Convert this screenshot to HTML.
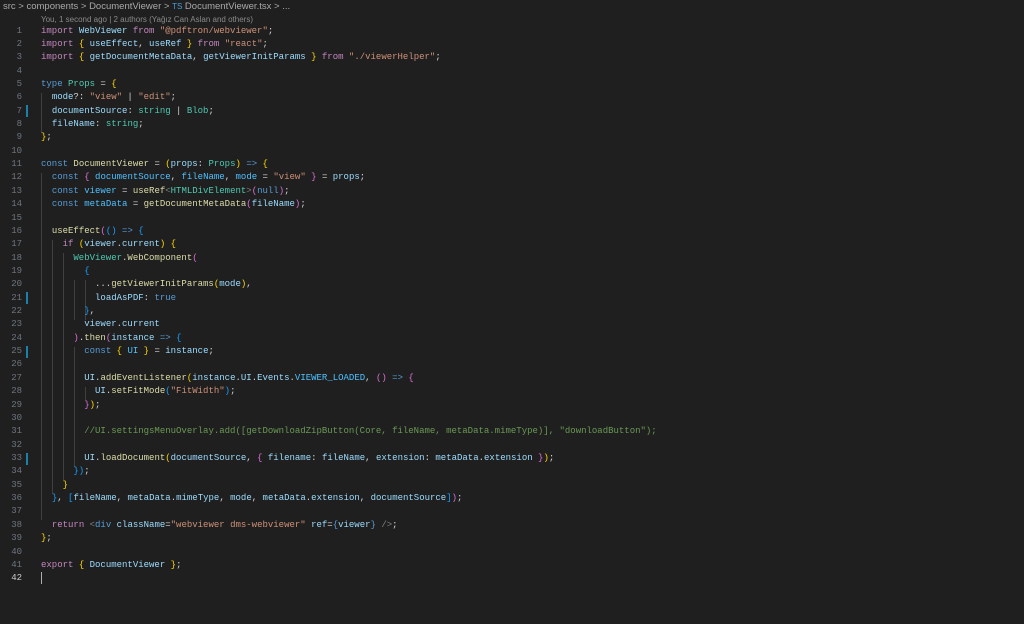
<!DOCTYPE html>
<html><head><meta charset="utf-8"><style>
body{margin:0;width:1024px;height:624px;background:#1f1f1f;overflow:hidden;position:relative;font-family:"Liberation Mono",monospace;}
.bc{position:absolute;left:3px;top:0;height:14px;font:9.5px "Liberation Sans",sans-serif;color:#a9a9a9;line-height:13px;white-space:pre}
.bl{position:absolute;left:41px;top:14px;font:8px "Liberation Sans",sans-serif;color:#8a8a8a;line-height:11px}
.nums{position:absolute;left:0;width:22px;top:24.5px;text-align:right;font-size:9px;line-height:13.37px;color:#6e7681}
.code{position:absolute;left:41px;top:24.5px;font-size:9px;line-height:13.37px;color:#d4d4d4}
.code div{white-space:pre}
.code div,.nums div{height:13.37px}
.k{color:#c586c0}.b{color:#569cd6}.v{color:#9cdcfe}.c{color:#4fc1ff}.f{color:#dcdcaa}.t{color:#4ec9b0}.s{color:#ce9178}.y{color:#ffd700}.p{color:#da70d6}.q{color:#179fff}.g{color:#6a9955}.gr{color:#808080}
.guide{position:absolute;width:1px;background:#404040}
.mod{position:absolute;left:26px;width:2px;background:#1b81a8}
</style></head><body>
<div class="bc">src &gt; components &gt; DocumentViewer &gt; <span style="color:#4a9fd6;font-size:8px">TS</span> DocumentViewer.tsx &gt; ...</div>
<div class="bl">You, 1 second ago | 2 authors (Yağız Can Aslan and others)</div>
<div class="guide" style="left:41px;top:93px;height:40px"></div>
<div class="guide" style="left:41px;top:173px;height:347px"></div>
<div class="guide" style="left:52px;top:240px;height:254px"></div>
<div class="guide" style="left:63px;top:253px;height:227px"></div>
<div class="guide" style="left:74px;top:280px;height:40px"></div>
<div class="guide" style="left:85px;top:280px;height:40px"></div>
<div class="guide" style="left:74px;top:347px;height:120px"></div>
<div class="guide" style="left:85px;top:387px;height:13px"></div>
<div class="mod" style="top:105px;height:12px"></div>
<div class="mod" style="top:292px;height:12px"></div>
<div class="mod" style="top:346px;height:12px"></div>
<div class="mod" style="top:453px;height:12px"></div>
<div class="nums">
<div>1</div><div>2</div><div>3</div><div>4</div><div>5</div><div>6</div><div>7</div><div>8</div><div>9</div><div>10</div><div>11</div><div>12</div><div>13</div><div>14</div><div>15</div><div>16</div><div>17</div><div>18</div><div>19</div><div>20</div><div>21</div><div>22</div><div>23</div><div>24</div><div>25</div><div>26</div><div>27</div><div>28</div><div>29</div><div>30</div><div>31</div><div>32</div><div>33</div><div>34</div><div>35</div><div>36</div><div>37</div><div>38</div><div>39</div><div>40</div><div>41</div><div style="color:#ccc">42</div>
</div>
<div class="code">
<div><span class="k">import</span> <span class="v">WebViewer</span> <span class="k">from</span> <span class="s">"@pdftron/webviewer"</span>;</div>
<div><span class="k">import</span> <span class="y">{</span> <span class="v">useEffect</span>, <span class="v">useRef</span> <span class="y">}</span> <span class="k">from</span> <span class="s">"react"</span>;</div>
<div><span class="k">import</span> <span class="y">{</span> <span class="v">getDocumentMetaData</span>, <span class="v">getViewerInitParams</span> <span class="y">}</span> <span class="k">from</span> <span class="s">"./viewerHelper"</span>;</div>
<div></div>
<div><span class="b">type</span> <span class="t">Props</span> = <span class="y">{</span></div>
<div>  <span class="v">mode</span>?: <span class="s">"view"</span> | <span class="s">"edit"</span>;</div>
<div>  <span class="v">documentSource</span>: <span class="t">string</span> | <span class="t">Blob</span>;</div>
<div>  <span class="v">fileName</span>: <span class="t">string</span>;</div>
<div><span class="y">}</span>;</div>
<div></div>
<div><span class="b">const</span> <span class="f">DocumentViewer</span> = <span class="y">(</span><span class="v">props</span>: <span class="t">Props</span><span class="y">)</span> <span class="b">=&gt;</span> <span class="y">{</span></div>
<div>  <span class="b">const</span> <span class="p">{</span> <span class="c">documentSource</span>, <span class="c">fileName</span>, <span class="c">mode</span> = <span class="s">"view"</span> <span class="p">}</span> = <span class="v">props</span>;</div>
<div>  <span class="b">const</span> <span class="c">viewer</span> = <span class="f">useRef</span><span class="gr">&lt;</span><span class="t">HTMLDivElement</span><span class="gr">&gt;</span><span class="p">(</span><span class="b">null</span><span class="p">)</span>;</div>
<div>  <span class="b">const</span> <span class="c">metaData</span> = <span class="f">getDocumentMetaData</span><span class="p">(</span><span class="v">fileName</span><span class="p">)</span>;</div>
<div></div>
<div>  <span class="f">useEffect</span><span class="p">(</span><span class="q">()</span> <span class="b">=&gt;</span> <span class="q">{</span></div>
<div>    <span class="k">if</span> <span class="y">(</span><span class="v">viewer</span>.<span class="v">current</span><span class="y">)</span> <span class="y">{</span></div>
<div>      <span class="t">WebViewer</span>.<span class="f">WebComponent</span><span class="p">(</span></div>
<div>        <span class="q">{</span></div>
<div>          ...<span class="f">getViewerInitParams</span><span class="y">(</span><span class="v">mode</span><span class="y">)</span>,</div>
<div>          <span class="v">loadAsPDF</span>: <span class="b">true</span></div>
<div>        <span class="q">}</span>,</div>
<div>        <span class="v">viewer</span>.<span class="v">current</span></div>
<div>      <span class="p">)</span>.<span class="f">then</span><span class="p">(</span><span class="v">instance</span> <span class="b">=&gt;</span> <span class="q">{</span></div>
<div>        <span class="b">const</span> <span class="y">{</span> <span class="c">UI</span> <span class="y">}</span> = <span class="v">instance</span>;</div>
<div></div>
<div>        <span class="v">UI</span>.<span class="f">addEventListener</span><span class="y">(</span><span class="v">instance</span>.<span class="v">UI</span>.<span class="v">Events</span>.<span class="c">VIEWER_LOADED</span>, <span class="p">()</span> <span class="b">=&gt;</span> <span class="p">{</span></div>
<div>          <span class="v">UI</span>.<span class="f">setFitMode</span><span class="q">(</span><span class="s">"FitWidth"</span><span class="q">)</span>;</div>
<div>        <span class="p">}</span><span class="y">)</span>;</div>
<div></div>
<div>        <span class="g">//UI.settingsMenuOverlay.add([getDownloadZipButton(Core, fileName, metaData.mimeType)], "downloadButton");</span></div>
<div></div>
<div>        <span class="v">UI</span>.<span class="f">loadDocument</span><span class="y">(</span><span class="v">documentSource</span>, <span class="p">{</span> <span class="v">filename</span>: <span class="v">fileName</span>, <span class="v">extension</span>: <span class="v">metaData</span>.<span class="v">extension</span> <span class="p">}</span><span class="y">)</span>;</div>
<div>      <span class="q">})</span>;</div>
<div>    <span class="y">}</span></div>
<div>  <span class="q">}</span>, <span class="q">[</span><span class="v">fileName</span>, <span class="v">metaData</span>.<span class="v">mimeType</span>, <span class="v">mode</span>, <span class="v">metaData</span>.<span class="v">extension</span>, <span class="v">documentSource</span><span class="q">]</span><span class="p">)</span>;</div>
<div></div>
<div>  <span class="k">return</span> <span class="gr">&lt;</span><span class="b">div</span> <span class="v">className</span>=<span class="s">"webviewer dms-webviewer"</span> <span class="v">ref</span>=<span class="b">{</span><span class="v">viewer</span><span class="b">}</span> <span class="gr">/&gt;</span>;</div>
<div><span class="y">}</span>;</div>
<div></div>
<div><span class="k">export</span> <span class="y">{</span> <span class="v">DocumentViewer</span> <span class="y">}</span>;</div>
<div><span style="border-left:1px solid #aeafad;display:inline-block;height:12px;vertical-align:middle"></span></div>
</div>
</body></html>
